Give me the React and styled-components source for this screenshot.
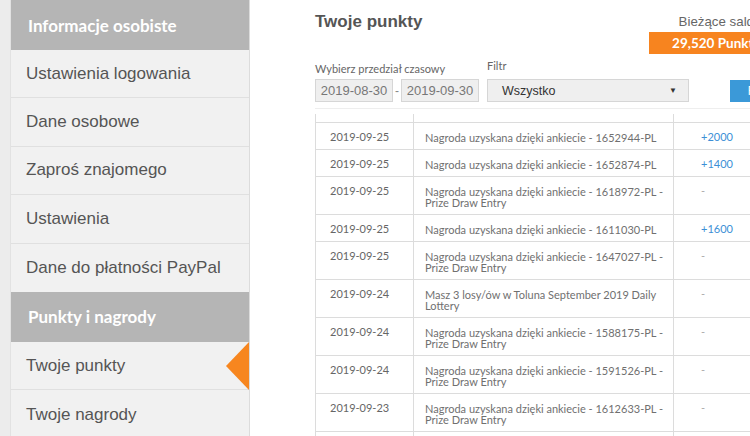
import React from 'react';
import styled, { createGlobalStyle, css } from 'styled-components';

const GlobalStyle = createGlobalStyle`
  html, body {
    margin: 0;
    padding: 0;
    overflow: hidden;
    background: #fff;
    font-family: 'Liberation Sans', Arial, sans-serif;
  }
`;

const navSections = [
  {
    title: 'Informacje osobiste',
    items: ['Ustawienia logowania', 'Dane osobowe', 'Zaproś znajomego', 'Ustawienia', 'Dane do płatności PayPal'],
  },
  {
    title: 'Punkty i nagrody',
    items: ['Twoje punkty', 'Twoje nagrody'],
  },
];

const prize = (id) => ['Nagroda uzyskana dzięki ankiecie - ' + id + '-PL -', 'Prize Draw Entry'];

const rows = [
  { date: '2019-09-25', desc: ['Nagroda uzyskana dzięki ankiecie - 1652944-PL'], points: '+2000' },
  { date: '2019-09-25', desc: ['Nagroda uzyskana dzięki ankiecie - 1652874-PL'], points: '+1400' },
  { date: '2019-09-25', desc: prize('1618972'), points: '-' },
  { date: '2019-09-25', desc: ['Nagroda uzyskana dzięki ankiecie - 1611030-PL'], points: '+1600' },
  { date: '2019-09-25', desc: prize('1647027'), points: '-' },
  { date: '2019-09-24', desc: ['Masz 3 losy/ów w Toluna September 2019 Daily', 'Lottery'], points: '-' },
  { date: '2019-09-24', desc: prize('1588175'), points: '-' },
  { date: '2019-09-24', desc: prize('1591526'), points: '-' },
  { date: '2019-09-23', desc: prize('1612633'), points: '-' },
  { date: '2019-09-23', desc: prize('1609874'), points: '-' },
];

const App = () => (
  <>
    <GlobalStyle />
    <Page>
      <Sidebar>
        {navSections.map((section) => (
          <div key={section.title}>
            <SectionTitle>{section.title}</SectionTitle>
            {section.items.map((item) => (
              <NavItem key={item} $active={item === 'Twoje punkty'}>
                {item}
              </NavItem>
            ))}
          </div>
        ))}
      </Sidebar>

      <Main>
        <Content>
          <TopBar>
            <Title>Twoje punkty</Title>
            <Balance>
              <BalanceLabel>Bieżące saldo</BalanceLabel>
              <BalanceBadge>29,520 Punktów</BalanceBadge>
            </Balance>
          </TopBar>

          <FilterRow>
            <Field>
              <FieldLabel>Wybierz przedział czasowy</FieldLabel>
              <DateRange>
                <DateInput readOnly value="2019-08-30" />
                <span>-</span>
                <DateInput readOnly value="2019-09-30" />
              </DateRange>
            </Field>
            <Field>
              <FieldLabel $lift>Filtr</FieldLabel>
              <Select>
                Wszystko
                <span className="arrow">▼</span>
              </Select>
            </Field>
            <FilterButton>Filtruj</FilterButton>
          </FilterRow>

          <Divider />

          <Table>
            <colgroup>
              <col style={{ width: 98 }} />
              <col style={{ width: 260 }} />
              <col style={{ width: 122 }} />
            </colgroup>
            <tbody>
              <HeadRow>
                <td />
                <td />
                <td />
              </HeadRow>
              {rows.map((row, i) => (
                <tr key={i}>
                  <DateCell>{row.date}</DateCell>
                  <DescCell>
                    {row.desc.map((line, j) => (
                      <div key={j}>{line}</div>
                    ))}
                  </DescCell>
                  <PointsCell $empty={row.points === '-'}>{row.points}</PointsCell>
                </tr>
              ))}
            </tbody>
          </Table>
        </Content>
      </Main>
    </Page>
  </>
);

const Page = styled.div`
  display: flex;
  height: 436px;
  overflow: hidden;
  padding-left: 10px;
  background: #ececec;
`;

const Sidebar = styled.nav`
  width: 240px;
  flex-shrink: 0;
  box-sizing: border-box;
  background: #f1f1f1;
  border-left: 1px solid #e2e2e2;
  border-right: 1px solid #dcdcdc;
`;

const SectionTitle = styled.div`
  height: 50px;
  display: flex;
  align-items: center;
  padding-left: 17px;
  background: #b5b5b5;
  color: #fff;
  font-family: Lato, 'Open Sans', sans-serif;
  font-weight: 700;
  font-size: 17px;
`;

const NavItem = styled.div`
  position: relative;
  height: 48.4px;
  box-sizing: border-box;
  display: flex;
  align-items: center;
  padding-left: 15px;
  border-bottom: 1px solid #e0e0e0;
  color: #555;
  font-size: 17px;

  &:last-child {
    border-bottom: none;
  }

  ${(p) =>
    p.$active &&
    css`
      &::after {
        content: '';
        position: absolute;
        right: 0;
        top: 0;
        border-style: solid;
        border-width: 24px 23px 24px 0;
        border-color: transparent #f7861f transparent transparent;
      }
    `}
`;

const Main = styled.main`
  flex: 1;
  overflow: hidden;
  background: #fff;
  padding-left: 65px;
`;

const Content = styled.div`
  width: 480px;
`;

const TopBar = styled.div`
  display: flex;
  justify-content: space-between;
  align-items: flex-start;
  padding-top: 12px;
`;

const Title = styled.h1`
  margin: 0;
  font-size: 17px;
  line-height: 20px;
  font-weight: 700;
  color: #555;
`;

const Balance = styled.div`
  width: 146px;
  display: flex;
  flex-direction: column;
  align-items: stretch;
  text-align: center;
`;

const BalanceLabel = styled.div`
  font-size: 13.3px;
  line-height: 19px;
  color: #666;
  padding-right: 4px;
`;

const BalanceBadge = styled.div`
  margin-top: 1px;
  height: 22px;
  line-height: 22px;
  background: #f7841f;
  color: #fff;
  font-family: Lato, sans-serif;
  font-weight: 700;
  font-size: 13.5px;
`;

const FilterRow = styled.div`
  display: flex;
  align-items: flex-end;
  gap: 8px;
  margin-top: 5px;
`;

const Field = styled.div`
  display: flex;
  flex-direction: column;
`;

const FieldLabel = styled.label`
  font-family: Lato, sans-serif;
  font-size: 11px;
  line-height: 14px;
  color: #666;
  margin-bottom: ${(p) => (p.$lift ? '6px' : '3px')};
`;

const DateRange = styled.div`
  display: flex;
  align-items: center;
  gap: 2px;
  color: #888;
  font-size: 12px;
`;

const DateInput = styled.input`
  width: 78px;
  height: 23px;
  box-sizing: border-box;
  margin: 0;
  padding: 0;
  border: 1px solid #d6d6d6;
  background: #efefef;
  color: #777;
  font-family: 'Liberation Sans', Arial, sans-serif;
  font-size: 13px;
  text-align: center;
  outline: none;
`;

const Select = styled.div`
  width: 202px;
  height: 23px;
  box-sizing: border-box;
  display: flex;
  align-items: center;
  justify-content: space-between;
  padding: 0 11px 0 14px;
  border: 1px solid #d6d6d6;
  background: #efefef;
  color: #333;
  font-size: 12.5px;

  .arrow {
    font-size: 8px;
  }
`;

const FilterButton = styled.button`
  margin-left: auto;
  width: 65px;
  height: 22px;
  border: none;
  background: #3b99d8;
  color: #fff;
  font-family: 'Liberation Sans', Arial, sans-serif;
  font-size: 12px;
`;

const Divider = styled.div`
  margin-top: 6px;
  border-top: 1px solid #eee;
  height: 5px;
`;

const Table = styled.table`
  width: 480px;
  table-layout: fixed;
  border-collapse: collapse;
  font-family: Lato, sans-serif;
  font-size: 11px;

  td {
    border: 1px solid #dcdcdc;
    vertical-align: top;
  }
`;

const HeadRow = styled.tr`
  height: 8px;

  td {
    border-top: none;
    padding: 0;
  }
`;

const DateCell = styled.td`
  padding: 7px 12px 5px 14px;
  line-height: 13px;
  color: #666;
`;

const DescCell = styled.td`
  padding: 9px 8px 6px 11px;
  line-height: 11px;
  color: #707070;
  white-space: nowrap;
`;

const PointsCell = styled.td`
  padding: 7px 8px 5px 27px;
  line-height: 13px;
  color: ${(p) => (p.$empty ? '#aaa' : '#3d8fd6')};
`;

export default App;
